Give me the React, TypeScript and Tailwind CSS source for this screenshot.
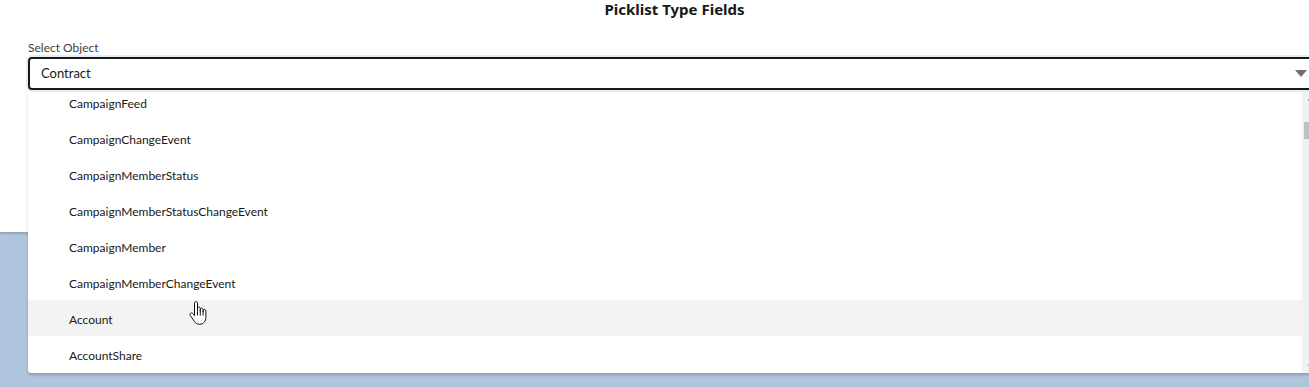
import { ChevronDown, ChevronUp } from "lucide-react";

const items = [
  "CampaignFeed",
  "CampaignChangeEvent",
  "CampaignMemberStatus",
  "CampaignMemberStatusChangeEvent",
  "CampaignMember",
  "CampaignMemberChangeEvent",
  "Account",
  "AccountShare",
];

const font = { fontFamily: 'Lato, "Open Sans", Arial, sans-serif' };
const titleFont = { fontFamily: '"Noto Sans", "Open Sans", Arial, sans-serif' };

function HandCursor() {
  return (
    <svg width="20" height="25" viewBox="0 0 20 25" className="pointer-events-none absolute left-[189px] top-[301px]">
      <path
        d="M5.5 2.2c0-1 .7-1.6 1.5-1.6s1.5.6 1.5 1.6v8.2V7.6c0-.9.7-1.5 1.4-1.5s1.4.6 1.4 1.5v3V8.6c0-.9.7-1.5 1.4-1.5s1.4.6 1.4 1.5v2.4-1.1c0-.9.7-1.4 1.4-1.4s1.4.5 1.4 1.4v6.3c0 4-2.6 7.1-6.3 7.1-2.6 0-4-1.2-5.3-3L1.3 14.4c-.6-.9-.3-1.9.5-2.3.8-.4 1.6-.1 2.2.6l1.5 1.9z"
        fill="#fff"
        stroke="#111"
        strokeWidth="1"
        strokeLinejoin="round"
      />
      <path d="M8.5 10.5v4M11.3 10.6v4M14.1 11v3.6" stroke="#111" strokeWidth="1" />
    </svg>
  );
}

export default function App() {
  return (
    <div className="relative h-[387px] w-[1309px] overflow-hidden bg-[#b0c4de]" style={font}>
      <div className="h-[233px] w-[1340px] border-b border-[#9aa5b3] bg-white shadow-[0_1px_2px_rgba(0,0,0,0.15)]">
        <h1
          className="w-[1309px] pl-[40px] pt-[0px] text-center text-[15px] font-bold leading-[18px] text-[#181818]"
          style={titleFont}
        >
          Picklist Type Fields
        </h1>
        <div className="pl-[28px] pt-[22px]">
          <label className="block text-[12px] leading-[16px] text-[#3e3e3c]">Select Object</label>
          <div className="mt-[1px] flex h-[33px] w-[1291px] items-center justify-between rounded-[4px] border-2 border-[#181818] pl-[11px] pr-[10px] shadow-[0_0_0_2px_#e3edf7]">
            <span className="pt-[1px] text-[13px] text-[#181818]">Contract</span>
            <span className="h-0 w-0 border-x-[6px] border-t-[7px] border-x-transparent border-t-[#706e6b]" />
          </div>
        </div>
      </div>

      <div className="absolute left-[28px] top-[92px] flex h-[281px] w-[1291px] overflow-hidden rounded-b-[3px] bg-white shadow-[0_2px_3px_rgba(0,0,0,0.2)]">
        <div className="flex-1 overflow-hidden">
          <ul className="-mt-[8px]">
            {items.map((item) => (
              <li
                key={item}
                className={`flex h-[36px] items-center pl-[41px] pt-[3px] text-[12px] text-[#181818] ${
                  item === "Account" ? "bg-[#f3f3f3]" : ""
                }`}
              >
                {item}
              </li>
            ))}
          </ul>
        </div>
        <div className="flex w-[17px] flex-col items-center bg-[#f1f1f1]">
          <ChevronUp className="mt-[3px] h-[8px] w-[8px] text-[#505050]" strokeWidth={4} />
          <div className="mt-[19px] h-[17px] w-[13px] bg-[#c1c1c1]" />
          <div className="flex-1" />
          <ChevronDown className="mb-[3px] h-[8px] w-[8px] text-[#505050]" strokeWidth={4} />
        </div>
      </div>

      <HandCursor />
    </div>
  );
}
